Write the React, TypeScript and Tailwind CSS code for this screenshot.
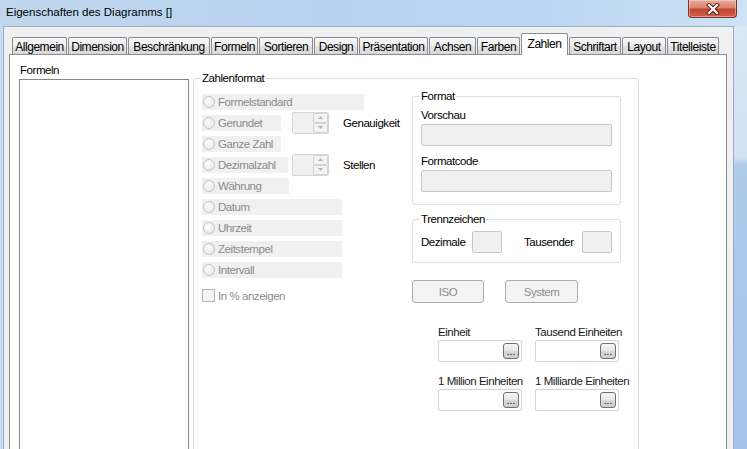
import React from 'react';

const NF = "font-['Liberation_Sans',Arial,sans-serif] tracking-[-0.45px]";

const tabs: { label: string; w: string; sel?: boolean }[] = [
  { label: 'Allgemein', w: 'w-[55px]' },
  { label: 'Dimension', w: 'w-[59px]' },
  { label: 'Beschränkung', w: 'w-[82px]' },
  { label: 'Formeln', w: 'w-[47px]' },
  { label: 'Sortieren', w: 'w-[54px]' },
  { label: 'Design', w: 'w-[44px]' },
  { label: 'Präsentation', w: 'w-[69px]' },
  { label: 'Achsen', w: 'w-[47px]' },
  { label: 'Farben', w: 'w-[43px]' },
  { label: 'Zahlen', w: 'w-[47px]', sel: true },
  { label: 'Schriftart', w: 'w-[52px]' },
  { label: 'Layout', w: 'w-[44px]' },
  { label: 'Titelleiste', w: 'w-[52px]' },
];

const rows: { label: string; w: string; spin?: string }[] = [
  { label: 'Formelstandard', w: 'w-[162px]' },
  { label: 'Gerundet', w: 'w-[79px]', spin: 'Genauigkeit' },
  { label: 'Ganze Zahl', w: 'w-[79px]' },
  { label: 'Dezimalzahl', w: 'w-[86px]', spin: 'Stellen' },
  { label: 'Währung', w: 'w-[87px]' },
  { label: 'Datum', w: 'w-[140px]' },
  { label: 'Uhrzeit', w: 'w-[140px]' },
  { label: 'Zeitstempel', w: 'w-[140px]' },
  { label: 'Intervall', w: 'w-[140px]' },
];

function Radio() {
  return (
    <span className="ml-[1px] w-[12px] h-[12px] rounded-full border border-[#c4c4c4] bg-[radial-gradient(circle_at_40%_35%,#fcfcfc,#e6e6e6)] shrink-0" />
  );
}

function Spin() {
  return (
    <div className="w-[37px] h-[22px] border border-[#d6d6d6] bg-[#f0f0f0] rounded-[2px] flex justify-end shrink-0">
      <div className="w-[15px] flex flex-col">
        <div className="h-[10px] border border-[#d2d2d2] bg-[#f3f3f3] rounded-[2px] flex items-center justify-center">
          <svg width="5" height="3" viewBox="0 0 5 3">
            <path d="M0 3 L2.5 0 L5 3Z" fill="#b2b2b2" />
          </svg>
        </div>
        <div className="h-[10px] border border-[#d2d2d2] bg-[#f3f3f3] rounded-[2px] flex items-center justify-center">
          <svg width="5" height="3" viewBox="0 0 5 3">
            <path d="M0 0 L2.5 3 L5 0Z" fill="#b2b2b2" />
          </svg>
        </div>
      </div>
    </div>
  );
}

function Legend({ children }: { children: React.ReactNode }) {
  return (
    <span className={`absolute -top-[8px] left-[7px] px-[1px] bg-white ${NF} text-[11.5px] leading-[14px] text-black`}>
      {children}
    </span>
  );
}

function DotsField({ label }: { label: string }) {
  return (
    <div className="w-[84px] flex flex-col">
      <div className={`${NF} text-[11.5px] leading-[14px] text-[#1a1a1a] whitespace-nowrap`}>{label}</div>
      <div className="mt-[1px] h-[22px] border border-[#d3d3d3] rounded-[2px] bg-white flex items-center justify-end pr-[2px]">
        <div className="w-[16px] h-[16px] border border-[#707070] rounded-[3px] bg-[linear-gradient(to_bottom,#f6f6f6,#e6e6e6_50%,#d8d8d8_50%,#cfcfcf)] flex items-end justify-center">
          <span className="font-['Liberation_Sans',sans-serif] text-[10px] leading-[10px] text-black pb-[1px]">...</span>
        </div>
      </div>
    </div>
  );
}

export default function App() {
  return (
    <div className="w-[747px] h-[449px] overflow-hidden flex flex-col bg-[#c6dbf0]">
      {/* Title bar */}
      <div className="h-[26px] shrink-0 flex items-start bg-[linear-gradient(to_right,#c0d6ed,#b6d2f0_45%,#bcd7f3_75%,#cfe2f6)]">
        <div className="flex-1 pl-[6px] pt-[5px] font-['Liberation_Sans',sans-serif] text-[11.5px] leading-[14px] text-black">
          Eigenschaften des Diagramms []
        </div>
        <div className="mr-[10px] w-[49px] h-[18px] rounded-b-[4px] border border-t-0 border-[#7e3326] bg-[linear-gradient(to_bottom,#e9ab9c,#d9826f_45%,#c3442f_55%,#d2634c)] flex items-center justify-center shadow-[inset_0_0_0_1px_rgba(255,255,255,0.35)]">
          <svg width="14" height="12" viewBox="0 0 14 12">
            <path d="M3 2 L11 10 M11 2 L3 10" stroke="#5a1a10" strokeWidth="4" strokeLinecap="square" />
            <path d="M3 2 L11 10 M11 2 L3 10" stroke="#ffffff" strokeWidth="2.2" strokeLinecap="square" />
          </svg>
        </div>
      </div>

      <div className="flex flex-1 min-h-0">
        <div className="w-[3px] shrink-0 bg-[#c7dcf1]" />
        {/* Client */}
        <div className="w-[731px] shrink-0 bg-[#f0f0f0] border-l border-r border-t border-[#9aafc5] pl-[5px] pt-[6px] flex flex-col">
          {/* Tabs */}
          <div className="flex items-end gap-[1px] pl-[3px] h-[21px]">
            {tabs.map((t) =>
              t.sel ? (
                <div
                  key={t.label}
                  className={`${t.w} h-[22px] -mb-[1px] relative z-10 bg-white border border-b-0 border-[#898c95] rounded-t-[2px] flex justify-center pt-[3px] ${NF} text-[12px] leading-[14px] text-black`}
                >
                  {t.label}
                </div>
              ) : (
                <div
                  key={t.label}
                  className={`${t.w} h-[17px] border border-b-0 border-[#898c95] rounded-t-[2px] bg-[linear-gradient(to_bottom,#f6f6f6,#eeeeee_50%,#e2e2e2_50%,#d9d9d9)] flex items-center justify-center pt-[1px] ${NF} text-[12px] leading-[14px] text-black`}
                >
                  {t.label}
                </div>
              )
            )}
          </div>

          {/* Tab page */}
          <div className="w-[718px] flex-1 border border-[#898c95] bg-white">
            <div className="flex pl-[9px]">
              {/* Formeln list */}
              <div className="w-[170px] shrink-0 flex flex-col">
                <div className={`${NF} text-[11.5px] leading-[14px] text-black mt-[8px] ml-[1px]`}>Formeln</div>
                <div className="mt-[2px] h-[380px] border border-[#828790] bg-white" />
              </div>

              {/* Zahlenformat group */}
              <div className="relative ml-[4px] mt-[23px] w-[446px] h-[380px] border border-[#d5dfe5] rounded-[3px] flex">
                <Legend>Zahlenformat</Legend>

                {/* Left column */}
                <div className="w-[218px] shrink-0 pl-[8px] pt-[12px] flex flex-col">
                  {rows.map((r) => {
                    const block = (
                      <div className={`${r.w} h-[16px] bg-[#f0f0f0] flex items-center shrink-0`}>
                        <Radio />
                        <span className={`ml-[3px] ${NF} text-[11.5px] leading-[14px] text-[#8b8b8b] whitespace-nowrap`}>
                          {r.label}
                        </span>
                      </div>
                    );
                    return (
                      <div key={r.label} className="flex items-center h-[21px]">
                        {r.spin ? (
                          <>
                            <div className="w-[90px] shrink-0 flex">{block}</div>
                            <Spin />
                            <span className={`ml-[14px] ${NF} text-[11.5px] leading-[14px] text-black whitespace-nowrap`}>
                              {r.spin}
                            </span>
                          </>
                        ) : (
                          block
                        )}
                      </div>
                    );
                  })}
                  <div className="mt-[5px] h-[21px] flex items-center">
                    <span className="w-[13px] h-[13px] border border-[#b4b4b4] bg-[#f4f4f4] shrink-0" />
                    <span className={`ml-[3px] ${NF} text-[11.5px] leading-[14px] text-[#8b8b8b] whitespace-nowrap`}>
                      In % anzeigen
                    </span>
                  </div>
                </div>

                {/* Right column */}
                <div className="w-[209px] shrink-0 mt-[17px] flex flex-col">
                  {/* Format group */}
                  <div className="relative h-[109px] border border-[#d5dfe5] rounded-[3px] px-[8px] pt-[11px] flex flex-col">
                    <Legend>Format</Legend>
                    <div className={`${NF} text-[11.5px] leading-[14px] text-black`}>Vorschau</div>
                    <div className="mt-[2px] h-[22px] border border-[#c8c8c8] rounded-[2px] bg-[#f0f0f0]" />
                    <div className={`mt-[8px] ${NF} text-[11.5px] leading-[14px] text-black`}>Formatcode</div>
                    <div className="mt-[2px] h-[22px] border border-[#c8c8c8] rounded-[2px] bg-[#f0f0f0]" />
                  </div>

                  {/* Trennzeichen group */}
                  <div className="relative mt-[14px] h-[44px] border border-[#d5dfe5] rounded-[3px] px-[8px] pt-[11px] flex items-start">
                    <Legend>Trennzeichen</Legend>
                    <div className={`w-[51px] h-[22px] flex items-center ${NF} text-[11.5px] leading-[14px] text-black`}>Dezimale</div>
                    <div className="w-[30px] h-[22px] border border-[#c8c8c8] rounded-[2px] bg-[#f0f0f0]" />
                    <div className={`ml-[22px] w-[58px] h-[22px] flex items-center ${NF} text-[11.5px] leading-[14px] text-black`}>Tausender</div>
                    <div className="w-[30px] h-[22px] border border-[#c8c8c8] rounded-[2px] bg-[#f0f0f0]" />
                  </div>

                  {/* Buttons */}
                  <div className="mt-[17px] flex">
                    <div className={`w-[72px] h-[23px] border border-[#adadad] rounded-[3px] bg-[#f4f4f4] flex items-center justify-center ${NF} text-[11.5px] leading-[14px] text-[#8b8b8b]`}>
                      ISO
                    </div>
                    <div className={`ml-[21px] w-[73px] h-[23px] border border-[#adadad] rounded-[3px] bg-[#f4f4f4] flex items-center justify-center ${NF} text-[11.5px] leading-[14px] text-[#8b8b8b]`}>
                      System
                    </div>
                  </div>

                  {/* Einheiten */}
                  <div className="ml-[26px] mt-[22px] grid grid-cols-[84px_84px] gap-x-[13px] gap-y-[12px]">
                    <DotsField label="Einheit" />
                    <DotsField label="Tausend Einheiten" />
                    <DotsField label="1 Million Einheiten" />
                    <DotsField label="1 Milliarde Einheiten" />
                  </div>
                </div>
              </div>
            </div>
          </div>
        </div>
        {/* Right glass frame */}
        <div className="w-[13px] shrink-0 bg-[linear-gradient(to_bottom,#d9e7f5_0px,#d2e2f3_130px,#aecbeb_140px,#a3c4e9_100%)]" />
      </div>
    </div>
  );
}
